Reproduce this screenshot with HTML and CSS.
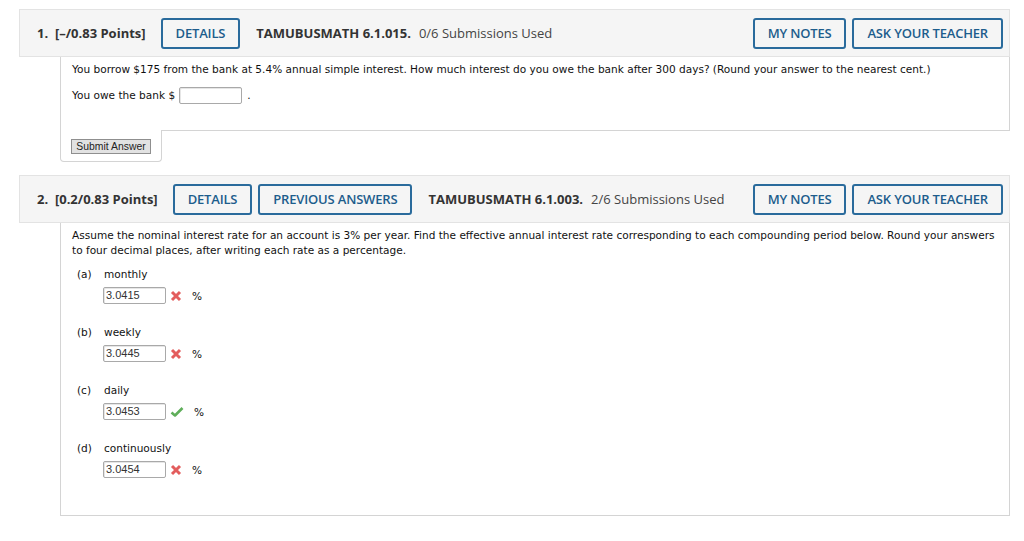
FILE: index.html
```html
<!DOCTYPE html>
<html>
<head>
<meta charset="utf-8">
<link rel="stylesheet" href="styles.css">
</head>
<body>
<div class="question q1">
  <div class="qhead">
    <span class="qnum">1.&nbsp; [–/0.83 Points]</span>
    <a class="btn">DETAILS</a>
    <span class="qcode">TAMUBUSMATH 6.1.015.</span>
    <span class="subs">0/6 Submissions Used</span>
    <span class="spacer"></span>
    <a class="btn">MY NOTES</a>
    <a class="btn">ASK YOUR TEACHER</a>
  </div>
  <div class="qbody">
    <p class="line">You borrow $175 from the bank at 5.4% annual simple interest. How much interest do you owe the bank after 300 days? (Round your answer to the nearest cent.)</p>
    <p class="line owe">You owe the bank $ <span class="input blank"></span> .</p>
  </div>
  <div class="tabrow">
    <div class="submit-tab"><span class="submit">Submit Answer</span></div>
  </div>
</div>

<div class="question q2">
  <div class="qhead">
    <span class="qnum">2.&nbsp; [0.2/0.83 Points]</span>
    <a class="btn">DETAILS</a>
    <a class="btn">PREVIOUS ANSWERS</a>
    <span class="qcode">TAMUBUSMATH 6.1.003.</span>
    <span class="subs">2/6 Submissions Used</span>
    <span class="spacer"></span>
    <a class="btn">MY NOTES</a>
    <a class="btn">ASK YOUR TEACHER</a>
  </div>
  <div class="qbody body2">
    <p class="text2">Assume the nominal interest rate for an account is 3% per year. Find the effective annual interest rate corresponding to each compounding period below. Round your answers to four decimal places, after writing each rate as a percentage.</p>
    <div class="parts">
      <div class="part">
        <div class="plabel"><span class="pl">(a)</span><span>monthly</span></div>
        <div class="pans"><span class="input">3.0415</span><svg class="ico" width="12" height="12" viewBox="0 0 12 12"><path d="M2 2 L10 10 M10 2 L2 10" stroke="#e35d5d" stroke-width="3" stroke-linecap="butt"/></svg><span class="pct">%</span></div>
      </div>
      <div class="part">
        <div class="plabel"><span class="pl">(b)</span><span>weekly</span></div>
        <div class="pans"><span class="input">3.0445</span><svg class="ico" width="12" height="12" viewBox="0 0 12 12"><path d="M2 2 L10 10 M10 2 L2 10" stroke="#e35d5d" stroke-width="3" stroke-linecap="butt"/></svg><span class="pct">%</span></div>
      </div>
      <div class="part">
        <div class="plabel"><span class="pl">(c)</span><span>daily</span></div>
        <div class="pans"><span class="input">3.0453</span><svg class="ico chk" width="14" height="12" viewBox="0 0 14 12"><path d="M1.5 6.5 L5 9.5 L12.5 2" fill="none" stroke="#5fae5a" stroke-width="2.6" stroke-linejoin="round"/></svg><span class="pct">%</span></div>
      </div>
      <div class="part">
        <div class="plabel"><span class="pl">(d)</span><span>continuously</span></div>
        <div class="pans"><span class="input">3.0454</span><svg class="ico" width="12" height="12" viewBox="0 0 12 12"><path d="M2 2 L10 10 M10 2 L2 10" stroke="#e35d5d" stroke-width="3" stroke-linecap="butt"/></svg><span class="pct">%</span></div>
      </div>
    </div>
  </div>
</div>
</body>
</html>
```

FILE: styles.css
```css
html, body {
  margin: 0;
  padding: 0;
  background: #fff;
}
body {
  padding: 9px 14px 0 19px;
  font-family: "DejaVu Sans", Verdana, sans-serif;
  color: #111;
}
.question.q2 {
  margin-top: 13px;
}
.qhead {
  display: flex;
  align-items: center;
  height: 46px;
  background: #f5f5f5;
  border: 1px solid #e3e3e3;
  padding: 0 6px 0 17px;
  font-family: "Open Sans", sans-serif;
  font-size: 13px;
  color: #333;
}
.qnum {
  font-weight: 700;
  margin-right: 15px;
}
.btn {
  display: inline-flex;
  align-items: center;
  height: 27px;
  padding: 0 13px;
  border: 2px solid #2a6b9c;
  border-radius: 3px;
  color: #1d5d8c;
  font-weight: 600;
  font-size: 13px;
  letter-spacing: -0.18px;
  margin-right: 6px;
}
.qcode {
  font-weight: 700;
  margin-left: 10px;
  margin-right: 8px;
}
.subs {
  font-weight: 400;
  color: #444;
}
.spacer {
  flex: 1;
}
.qhead .btn:last-child {
  margin-right: 0;
}
.qbody {
  margin-left: 41px;
  border: 1px solid #d4d4d4;
  border-top: none;
  background: #fff;
  padding: 5px 4px 0 11px;
  font-size: 10.55px;
}
.q1 .qbody {
  height: 68px;
}
.line {
  margin: 0;
  line-height: 15px;
}
.owe {
  margin-top: 10px;
  display: flex;
  align-items: center;
}
.input {
  display: inline-block;
  box-sizing: border-box;
  width: 63px;
  height: 17px;
  border: 1px solid #a9a9a9;
  border-radius: 2px;
  background: #fff;
  font-family: "Liberation Sans", Arial, sans-serif;
  font-size: 11px;
  line-height: 15px;
  padding-left: 2px;
  color: #333;
  box-shadow: inset 1px 1px 0 #e6e6e6;
}
.owe .input {
  margin: 0 5px 0 4px;
}
.tabrow {
  display: flex;
  margin-left: 41px;
  margin-top: -1px;
}
.submit-tab {
  width: 102px;
  height: 32px;
  background: #fff;
  border: 1px solid #d4d4d4;
  border-top: none;
  border-radius: 0 0 4px 4px;
  padding: 9px 0 0 10px;
  box-sizing: border-box;
}
.submit {
  display: block;
  box-sizing: border-box;
  width: 80px;
  height: 15px;
  background: #e2e2e2;
  border: 1px solid #8f8f8f;
  font-family: "Liberation Sans", Arial, sans-serif;
  font-size: 10.4px;
  line-height: 13px;
  text-align: center;
  color: #222;
}
.body2 {
  height: 287px;
}
.text2 {
  margin: 0;
  line-height: 15px;
}
.parts {
  margin-top: 9px;
  padding-left: 5px;
}
.part {
  margin-bottom: 21px;
}
.plabel {
  display: flex;
  line-height: 15px;
  height: 15px;
}
.pl {
  width: 27px;
}
.pans {
  display: flex;
  align-items: center;
  margin-top: 5px;
  padding-left: 26px;
}
.ico {
  margin-left: 4px;
}
.pct {
  margin-left: 10px;
}
```
